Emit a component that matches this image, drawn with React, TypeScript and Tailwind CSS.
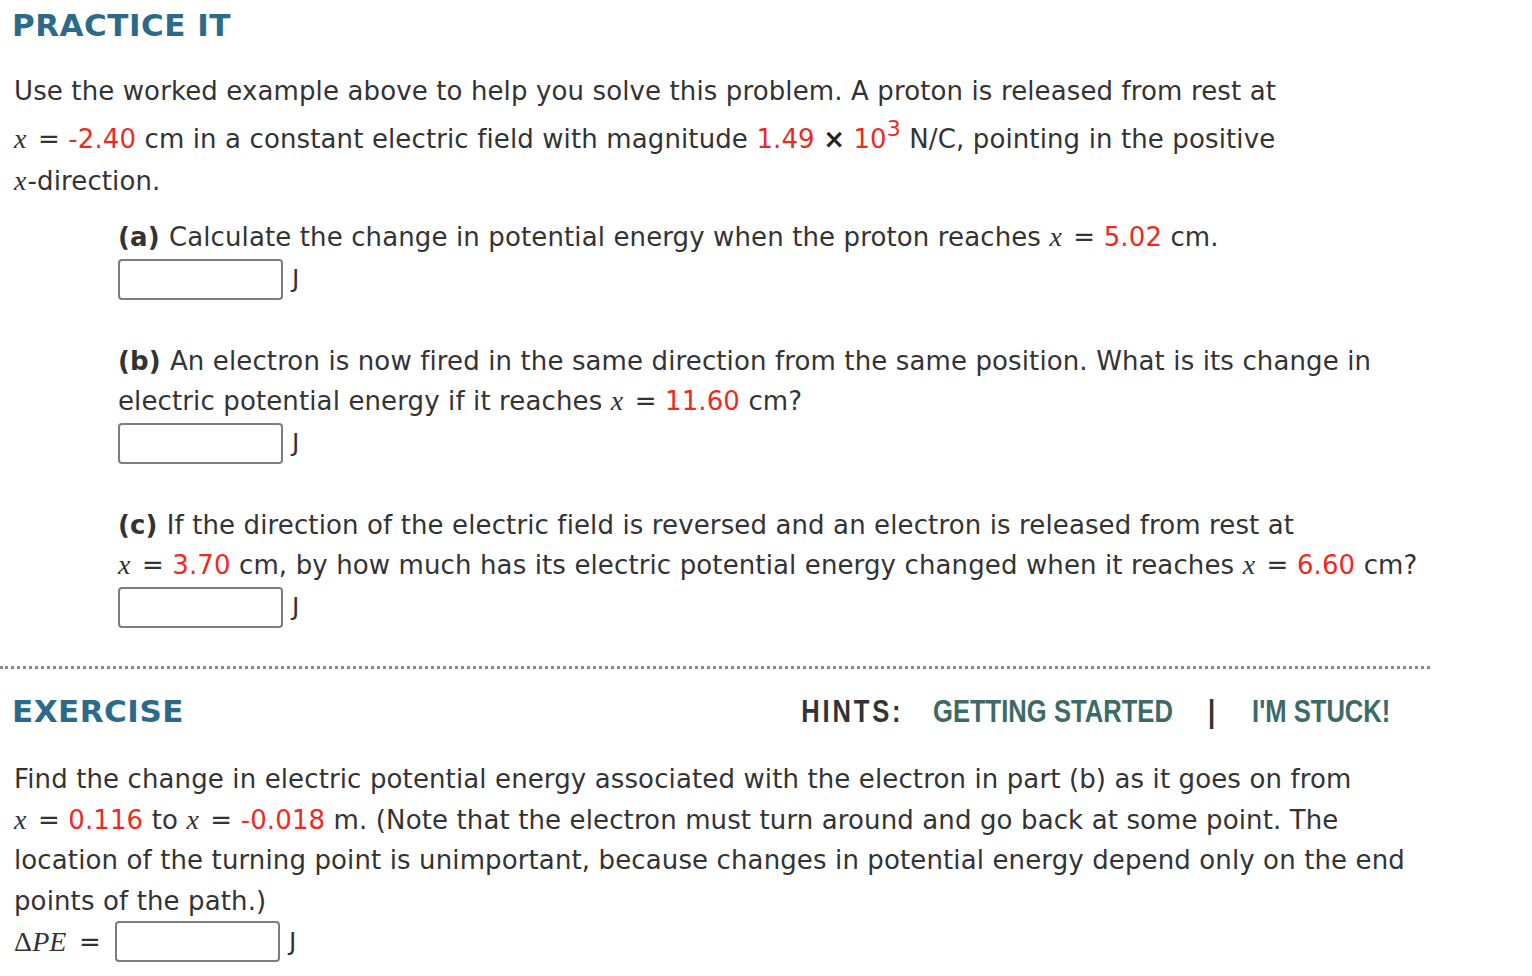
const RED = 'text-[#ee2a1f]'

function X({ tight }: { tight?: boolean }) {
  return (
    <span className={`font-['Liberation_Serif',serif] italic text-[28px] ${tight ? 'mr-[1px]' : 'mr-[3px]'}`}>x</span>
  )
}

function Num({ children }: { children: React.ReactNode }) {
  return <span className={RED}>{children}</span>
}

function Answer({ label, height = 'h-[44px]' }: { label?: React.ReactNode; height?: string }) {
  return (
    <div className={`flex items-center ${height}`}>
      {label}
      <div className="w-[165px] h-[41px] rounded-[4px] border-2 border-[#7d7d7d] bg-white" />
      <span className="ml-[9px] text-[25px]">J</span>
    </div>
  )
}

function Part({ tag, lines }: { tag: string; lines: React.ReactNode[] }) {
  return (
    <div className="pl-[118px]">
      <div className="leading-[40px] whitespace-nowrap">
        {lines.map((l, i) => (
          <div key={i}>
            {i === 0 && <b>({tag}) </b>}
            {l}
          </div>
        ))}
      </div>
      <Answer />
    </div>
  )
}

export default function App() {
  return (
    <div className="w-[1532px] h-[976px] bg-white text-[#333] font-['DejaVu_Sans',Verdana,sans-serif] text-[26px] tracking-[0.12px] overflow-hidden">
      <div className="w-[1430px]">
        <h2 className="pl-[12px] pt-[6px] text-[31px] font-bold text-[#2b6a89] leading-[38px] tracking-[0.5px]">PRACTICE IT</h2>

        <div className="pl-[14px] pt-[26px] leading-[42px] whitespace-nowrap">
          <div>Use the worked example above to help you solve this problem. A proton is released from rest at</div>
          <div className="mt-[6px]">
            <X /> = <Num>-2.40</Num> cm in a constant electric field with magnitude <Num>1.49</Num>{' '}
            <b className="text-[#222]">×</b>{' '}
            <Num>
              10<sup className="text-[22px] relative -top-[12px]">3</sup>
            </Num>{' '}
            N/C, pointing in the positive
          </div>
          <div>
            <X tight />-direction.
          </div>
        </div>

        <div className="mt-[15px] flex flex-col gap-[40px]">
          <Part
            tag="a"
            lines={[
              <>
                Calculate the change in potential energy when the proton reaches <X /> = <Num>5.02</Num> cm.
              </>,
            ]}
          />
          <Part
            tag="b"
            lines={[
              <>An electron is now fired in the same direction from the same position. What is its change in</>,
              <>
                electric potential energy if it reaches <X /> = <Num>11.60</Num> cm?
              </>,
            ]}
          />
          <Part
            tag="c"
            lines={[
              <>If the direction of the electric field is reversed and an electron is released from rest at</>,
              <>
                <X /> = <Num>3.70</Num> cm, by how much has its electric potential energy changed when it reaches{' '}
                <X /> = <Num>6.60</Num> cm?
              </>,
            ]}
          />
        </div>

        <div className="mt-[37px] border-t-[3px] border-dotted border-[#888]" />

        <div className="flex items-center justify-between pl-[12px] pr-[40px] mt-[23px] h-[38px]">
          <h2 className="text-[31px] font-bold text-[#2b6a89] tracking-[0.5px]">EXERCISE</h2>
          <div className="flex items-center whitespace-nowrap font-['Liberation_Sans',Arial,sans-serif] font-bold text-[32px] tracking-normal scale-x-[0.8] origin-right">
            <span className="text-[#333] tracking-[3.5px]">HINTS:</span>
            <span className="ml-[37px] text-[#3d6a66]">GETTING STARTED</span>
            <span className="ml-[44px] mr-[46px] text-[#333]">|</span>
            <span className="text-[#3d6a66]">I'M STUCK!</span>
          </div>
        </div>

        <div className="pl-[14px] pt-[29px] leading-[40.7px] whitespace-nowrap">
          <div>Find the change in electric potential energy associated with the electron in part (b) as it goes on from</div>
          <div>
            <X /> = <Num>0.116</Num> to <X /> = <Num>-0.018</Num> m. (Note that the electron must turn around and go back
            at some point. The
          </div>
          <div>
            location of the turning point is unimportant, because changes in potential energy depend only on the end
          </div>
          <div>points of the path.)</div>
        </div>
        <div className="pl-[14px]">
          <Answer
            height="h-[40px]"
            label={
              <span className="mr-[14px] whitespace-nowrap">
                <span className="font-['Liberation_Serif',serif] text-[28px]">Δ</span>
                <span className="font-['Liberation_Serif',serif] italic text-[28px] mr-[4px]">PE</span> =
              </span>
            }
          />
        </div>
      </div>
    </div>
  )
}
